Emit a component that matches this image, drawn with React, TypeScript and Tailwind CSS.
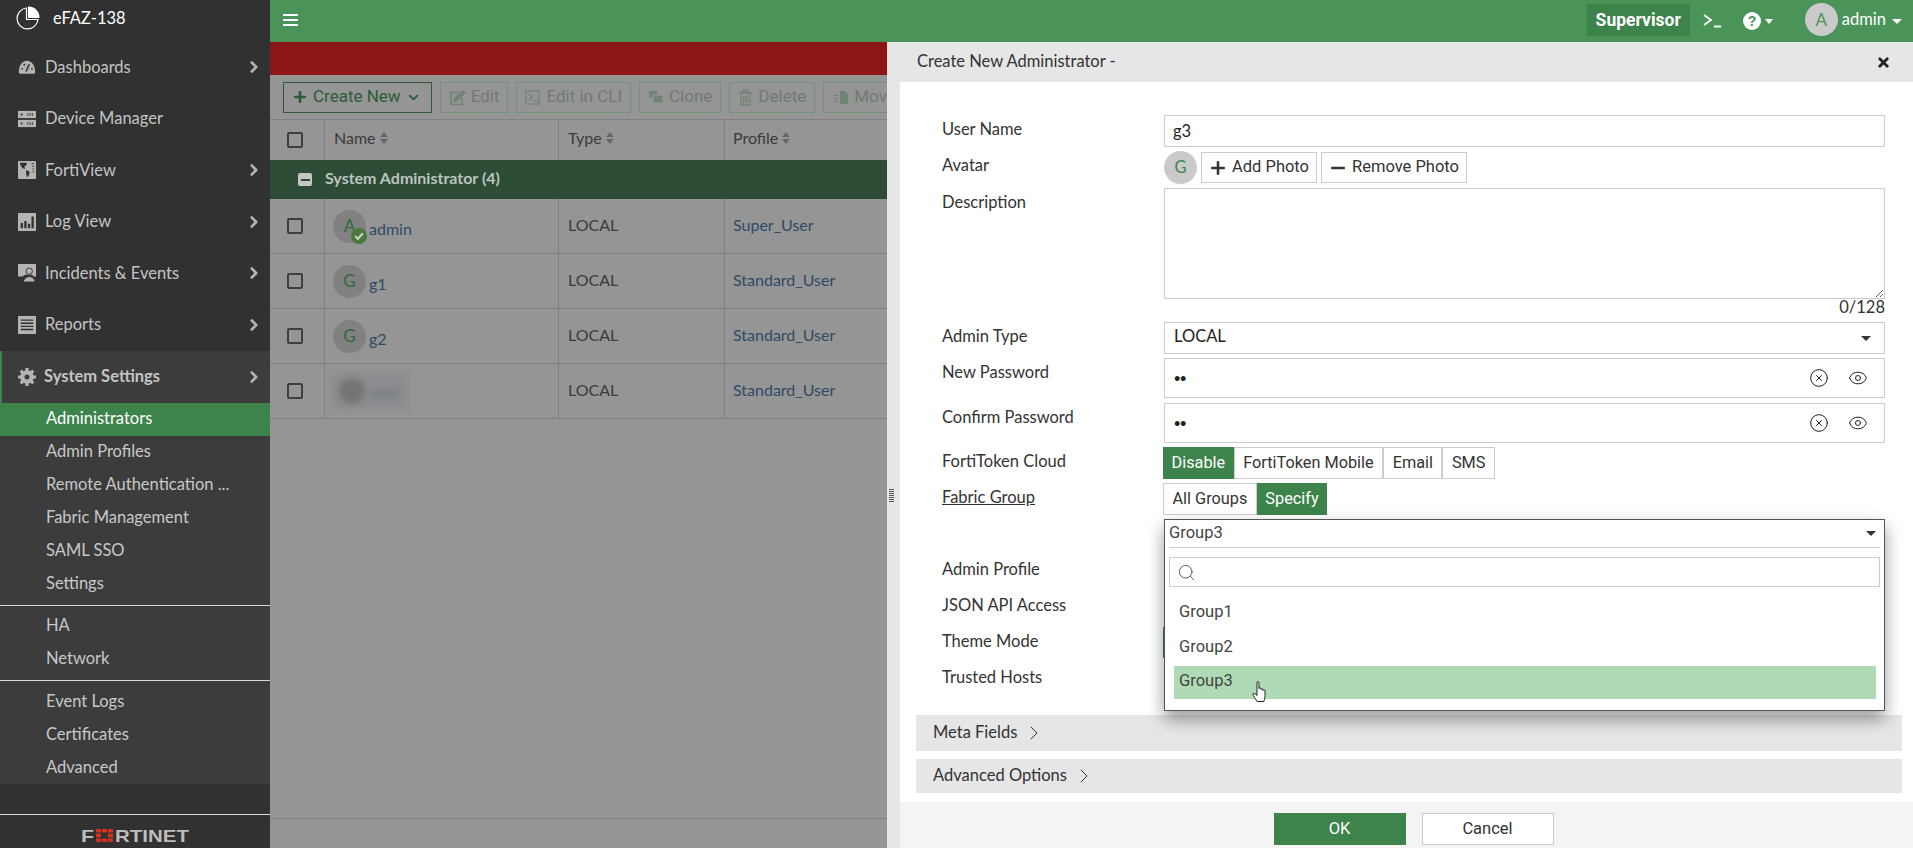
import { ChevronDown, ChevronRight, CircleX, Eye, Search, Minus, Plus, X } from "lucide-react";

const lato = "font-['Lato','Noto_Sans',sans-serif]";
const roboto = "font-['Roboto','Liberation_Sans',sans-serif]";

// sidebar icons, all drawn on a 20x20 box
const DashIcon = () => (
  <svg width="18" height="18" viewBox="0 0 20 20" fill="#b4b4b4">
    <path d="M1 16.500C.4 9 4.500 3 10 3s9.600 6 9 13.500c0 .6-.5 1-1 1H2c-.5 0-1-.4-1-1z" />
    <path d="M9 15l3.500-8" stroke="#313131" strokeWidth="1.800" />
    <circle cx="4.500" cy="12" r="1" fill="#313131" />
    <circle cx="7" cy="7.500" r="1" fill="#313131" />
    <circle cx="15.500" cy="12" r="1" fill="#313131" />
  </svg>
);
const DeviceIcon = () => (
  <svg width="18" height="18" viewBox="0 0 20 20">
    <rect x="0" y="1" width="20" height="8" fill="#b4b4b4" />
    <rect x="0" y="11" width="20" height="8" fill="#b4b4b4" />
    <rect x="3" y="4" width="2" height="2" fill="#313131" />
    <rect x="3" y="14" width="2" height="2" fill="#313131" />
    <path d="M11 3.500v3M13.500 3.500v3M16 3.500v3M11 13.500v3M13.500 13.500v3M16 13.500v3" stroke="#313131" />
  </svg>
);
const MapIcon = () => (
  <svg width="18" height="18" viewBox="0 0 20 20">
    <rect x="0" y="0" width="20" height="20" rx="1" fill="#b4b4b4" />
    <path d="M2 2h8l-1 3-2 1 1 3-3-1-2-3zM9 10l4 2-1 4-2 2-1-4z" fill="#313131" />
    <path d="M15 3h3M16 6h2M16 9h2M16 12h2" stroke="#313131" />
  </svg>
);
const LogIcon = () => (
  <svg width="18" height="18" viewBox="0 0 20 20">
    <rect x="0" y="0" width="20" height="20" fill="#b4b4b4" />
    <path d="M3 11h2.500v6H3zM7 9h2.500v8H7zM11 12h2.500v5H11zM15 4h2.500v13H15z" fill="#313131" />
  </svg>
);
const IncidentIcon = () => (
  <svg width="18" height="18" viewBox="0 0 20 20">
    <path d="M0 0h20v14h-3l-1-2H8l-3 2H0z" fill="#b4b4b4" />
    <circle cx="12.500" cy="8" r="3.500" fill="#b4b4b4" stroke="#313131" />
    <path d="M6 20c0-3 3-6 6.500-6s6.500 3 6.500 6z" fill="#b4b4b4" stroke="#313131" />
  </svg>
);
const ReportIcon = () => (
  <svg width="18" height="18" viewBox="0 0 20 20">
    <rect x="0" y="0" width="20" height="20" fill="#b4b4b4" />
    <path d="M3 4.500h14M3 8h14M3 11.500h14M3 15h14" stroke="#313131" strokeWidth="1.500" />
  </svg>
);
const GearIcon = () => (
  <svg width="18" height="18" viewBox="0 0 20 20">
    <circle cx="10" cy="10" r="7.500" fill="#b4b4b4" />
    <path d="M10 0v20M0 10h20M3 3l14 14M17 3L3 17" stroke="#b4b4b4" strokeWidth="3.500" />
    <circle cx="10" cy="10" r="2.800" fill="#3c3c3c" />
  </svg>
);

const menu = [
  { label: "Dashboards", icon: <DashIcon />, arrow: true },
  { label: "Device Manager", icon: <DeviceIcon />, arrow: false },
  { label: "FortiView", icon: <MapIcon />, arrow: true },
  { label: "Log View", icon: <LogIcon />, arrow: true },
  { label: "Incidents & Events", icon: <IncidentIcon />, arrow: true },
  { label: "Reports", icon: <ReportIcon />, arrow: true },
];

const SubItem = ({ label, active, low }: { label: string; active?: boolean; low?: boolean }) => (
  <div className={`h-[33px] pl-[46px] flex items-center text-[16.500px] ${low ? "pb-[1px]" : "pb-[3px]"} ${active ? "bg-[#3c834c] text-white" : "text-[#c8c8c8]"}`}>{label}</div>
);

const Sidebar = () => (
  <aside className={`w-[270px] shrink-0 h-full bg-[#313131] flex flex-col ${lato}`}>
    <div className="h-[42px] pl-[15px] pb-[5px] flex items-center gap-[13px] text-white text-[16.500px]">
      <svg width="25" height="25" viewBox="0 0 25 25" fill="none">
        <path d="M11.500 2A10.500 10.500 0 1 0 23 13.500H11.500z" stroke="white" strokeWidth="1.200" />
        <path d="M13 .5a11 11 0 0 1 11.500 11.500H13z" fill="white" />
      </svg>
      <span>eFAZ-138</span>
    </div>
    {menu.map((m) => (
      <div key={m.label} className="h-[51.500px] pl-[18px] pr-[7px] pb-[1px] flex items-center text-[#c4c4c4] text-[16.500px]">
        <span className="w-[18px] mr-[9px] flex">{m.icon}</span>
        <span className="flex-1">{m.label}</span>
        {m.arrow && <ChevronRight size={18} strokeWidth={3.500} className="text-[#b4b4b4]" />}
      </div>
    ))}
    <div className="h-[52px] bg-[#3c3c3c] border-l-2 border-[#3c834c] pl-[16px] pr-[7px] pb-[1px] flex items-center text-[#c4c4c4] text-[16.500px] font-bold">
      <span className="w-[18px] mr-[8px] flex"><GearIcon /></span>
      <span className="flex-1">System Settings</span>
      <ChevronRight size={18} strokeWidth={3.500} className="text-[#b4b4b4]" />
    </div>
    <div className="bg-[#3c3c3c]">
      <SubItem label="Administrators" active />
      <SubItem label="Admin Profiles" />
      <SubItem label="Remote Authentication ..." />
      <SubItem label="Fabric Management" />
      <SubItem label="SAML SSO" />
      <SubItem label="Settings" />
      <div className="h-[8px] flex items-center"><div className="h-px w-full bg-[#d8d8d8]" /></div>
      <SubItem label="HA" low />
      <SubItem label="Network" low />
      <div className="h-[10px] flex items-center"><div className="h-px w-full bg-[#d8d8d8]" /></div>
      <SubItem label="Event Logs" low />
      <SubItem label="Certificates" low />
      <SubItem label="Advanced" low />
    </div>
    <div className="h-[30px] shrink-0" />
    <div className="flex-1 border-t border-[#d8d8d8] flex items-center justify-center pt-[6px]">
      <svg width="108" height="20" viewBox="0 -4 108 20">
        <text x="0" y="12.500" fontFamily="Liberation Sans" fontWeight="700" fontSize="17" fill="#bdbdbd" textLength="13" lengthAdjust="spacingAndGlyphs">F</text>
        <text x="34" y="12.500" fontFamily="Liberation Sans" fontWeight="700" fontSize="17" fill="#bdbdbd" textLength="74" lengthAdjust="spacingAndGlyphs">RTINET</text>
        <g fill="#d8301f">
          <rect x="15" y="0" width="5" height="3.500" /><rect x="21" y="0" width="5" height="3.500" /><rect x="27" y="0" width="5" height="3.500" />
          <rect x="15" y="4.700" width="5" height="3.500" /><rect x="27" y="4.700" width="5" height="3.500" />
          <rect x="15" y="9.400" width="5" height="3.500" /><rect x="21" y="9.400" width="5" height="3.500" /><rect x="27" y="9.400" width="5" height="3.500" />
        </g>
      </svg>
    </div>
  </aside>
);

const Topbar = () => (
  <header className={`h-[42px] shrink-0 bg-[#4a9359] flex items-center pl-[13px] pr-[11px] text-white ${roboto}`}>
    <div className="flex flex-col gap-[2.500px] w-[15px] -mt-[2px]">
      <span className="h-[2.500px] bg-white" /><span className="h-[2.500px] bg-white" /><span className="h-[2.500px] bg-white" />
    </div>
    <div className="flex-1" />
    <div className="h-[32px] px-[9px] -mt-[2px] flex items-center bg-[#3c834c] font-bold text-[17.500px]">Supervisor</div>
    <svg className="ml-[13px] -mt-[1px]" width="18" height="15" viewBox="0 0 18 15" fill="none" stroke="white" strokeWidth="1.800">
      <path d="M1 2l7 5-7 5M11 13.500h7" />
    </svg>
    <svg className="ml-[22px]" width="18" height="18" viewBox="0 0 18 18">
      <circle cx="9" cy="9" r="9" fill="white" />
      <text x="9" y="14" fontSize="14" fontWeight="700" textAnchor="middle" fill="#4a9359" fontFamily="Liberation Sans">?</text>
    </svg>
    <span className="ml-[4px] w-0 h-0 border-x-[4.500px] border-x-transparent border-t-[5px] border-t-white" />
    <div className={`ml-[32px] -mt-[3px] w-[33px] h-[33px] rounded-full bg-[#cacaca] flex items-center justify-center text-[#4a9359] text-[17px] ${lato}`}>A</div>
    <span className={`ml-[4px] pb-[4px] text-[16.500px] ${lato}`}>admin</span>
    <span className="ml-[6px] w-0 h-0 border-x-[5px] border-x-transparent border-t-[5px] border-t-white" />
  </header>
);

const ToolButton = ({ label, icon, primary }: { label: string; icon: React.ReactNode; primary?: boolean }) => (
  <div className={`h-[31px] flex items-center gap-[5px] border text-[17px] shrink-0 pl-[8px] ${primary ? "pr-[10px] border-[#2c5b36] text-[#2c5b36]" : "pr-[8px] border-[#6f9577] text-[#6e7b71]"}`}>
    {icon}
    {label}
    {primary && <ChevronDown size={15} strokeWidth={3} className="text-[#2c5b36]" />}
  </div>
);

const Sort = () => (
  <span className="inline-flex flex-col gap-[2px] ml-[4px] align-middle">
    <span className="w-0 h-0 border-x-[4px] border-x-transparent border-b-[5px] border-b-[#666]" />
    <span className="w-0 h-0 border-x-[4px] border-x-transparent border-t-[5px] border-t-[#666]" />
  </span>
);

const Check = () => <span className="w-[16px] h-[16px] border-2 border-[#3e3e3e] rounded-[2px] block" />;

const rows = [
  { name: "admin", letter: "A", profile: "Super_User" },
  { name: "g1", letter: "G", profile: "Standard_User" },
  { name: "g2", letter: "G", profile: "Standard_User" },
  { name: "", letter: "", profile: "Standard_User" },
];

const AdminTable = () => (
  <div className={`w-[617px] shrink-0 h-full overflow-hidden bg-[#959595] flex flex-col ${lato}`}>
    <div className="h-[33px] bg-[#8c1515] shrink-0" />
    <div className={`h-[44px] shrink-0 pl-[13px] flex items-center gap-[8px] overflow-hidden ${roboto}`}>
      <ToolButton primary label="Create New" icon={<Plus size={16} strokeWidth={4} className="text-[#2c5b36]" />} />
      <ToolButton label="Edit" icon={<svg width="17" height="17" viewBox="0 0 17 17" fill="none" stroke="#6f8475" strokeWidth="1.600"><path d="M13 9v6.500H2v-12h8" /><path d="M5 12l1-3 8-7 2 2-8 7z" fill="#6f8475" /></svg>} />
      <ToolButton label="Edit in CLI" icon={<svg width="16" height="16" viewBox="0 0 16 16" fill="none" stroke="#6f8475" strokeWidth="1.300"><rect x="1" y="2" width="13" height="13" /><path d="M4 5l3 3-3 3M8 12h4" /></svg>} />
      <ToolButton label="Clone" icon={<svg width="16" height="14" viewBox="0 0 16 14" fill="#6f8475"><rect x="1" y="1" width="8" height="7" /><rect x="5" y="5" width="10" height="8" stroke="#959595" /></svg>} />
      <ToolButton label="Delete" icon={<svg width="15" height="17" viewBox="0 0 15 17" fill="none" stroke="#6f8475" strokeWidth="1.300"><path d="M1 4h13M3 4v12h9V4M5 4V1.500h5V4M5.500 7v7M7.500 7v7M9.500 7v7" /></svg>} />
      <ToolButton label="Move" icon={<svg width="17" height="15" viewBox="0 0 17 15" fill="#6f8475"><path d="M8 1h5l3 3v10H8zM1 5h5v1H1zM3 8h3v1H3zM1 11h5v1H1z" /></svg>} />
    </div>
    <div className="flex-1 min-h-0">
      <div className="grid grid-cols-[55px_234px_166px_1fr] h-[41px] border-t border-[#808080] text-[#3b3b3b] text-[16px]">
        <div className="flex items-center pl-[17px] border-r border-[#808080]"><Check /></div>
        <div className="flex items-center pl-[9px] pb-[4px] border-r border-[#808080]">Name<Sort /></div>
        <div className="flex items-center pl-[9px] pb-[4px] border-r border-[#808080]">Type<Sort /></div>
        <div className="flex items-center pl-[8px] pb-[4px]">Profile<Sort /></div>
      </div>
      <div className="h-[39px] bg-[#2d4c36] flex items-center pl-[28px] text-[#bcc4be] font-bold text-[16px]">
        <span className="w-[14px] h-[13px] bg-[#c6c6c6] rounded-[2px] mr-[13px] flex items-center justify-center"><span className="w-[9px] h-[2px] bg-[#2d4c36]" /></span>
        <span className="pb-[3px]">System Administrator (4)</span>
      </div>
      {rows.map((r) => (
        <div key={r.profile + r.name} className="grid grid-cols-[55px_234px_166px_1fr] h-[55px] border-b border-[#808080] text-[16px]">
          <div className="flex items-center pl-[17px] border-r border-[#808080]"><Check /></div>
          <div className="flex items-center pl-[8px] border-r border-[#808080]">
            {r.letter ? (
              <>
                <span className="relative w-[33px] h-[33px] rounded-full bg-[#818181] flex items-center justify-center text-[#2e6b3b] text-[17px]">
                  {r.letter}
                  {r.name === "admin" && (
                    <span className="absolute -right-px -bottom-[1px] w-[16px] h-[16px] rounded-full bg-[#4a7a3a] flex items-center justify-center">
                      <svg width="10" height="10" viewBox="0 0 9 9" fill="none" stroke="#c9c9c9" strokeWidth="2"><path d="M1 4.500l2.500 2.500L8 2" /></svg>
                    </span>
                  )}
                </span>
                <span className="ml-[3px] mt-[5px] text-[#2f4a66]">{r.name}</span>
              </>
            ) : (
              <span className="-ml-[2px] w-[77px] h-[38px] bg-[#8b8d90] blur-[3px] flex items-center pl-[8px] gap-[6px]">
                <span className="w-[26px] h-[26px] rounded-full bg-[#747474]" />
                <span className="w-[28px] h-[10px] mt-[6px] bg-[#7e8186]" />
              </span>
            )}
          </div>
          <div className="flex items-center pl-[9px] pb-[2px] border-r border-[#808080] text-[#3b3b3b]">LOCAL</div>
          <div className="flex items-center pl-[8px] pb-[2px] text-[#2f4a66]">{r.profile}</div>
        </div>
      ))}
    </div>
    <div className="h-[30px] shrink-0 border-t border-[#808080]" />
  </div>
);

const Field = ({ label, underline, className, children }: { label?: string; underline?: boolean; className?: string; children?: React.ReactNode }) => (
  <div className={`grid grid-cols-[222px_1fr] ${className ?? ""}`}>
    <div className={`pt-[4px] text-[16.500px] leading-[20px] text-[#333] ${underline ? "underline" : ""}`}>{label}</div>
    <div>{children}</div>
  </div>
);

const Segment = ({ items, active }: { items: string[]; active: string }) => (
  <div className={`flex h-[32px] -ml-px text-[16.300px] ${roboto}`}>
    {items.map((it) => (
      <span key={it} className={it === active ? "bg-[#3c834c] text-white px-[8.500px] flex items-center" : "border border-[#ccc] px-[8.500px] flex items-center text-[#333]"}>{it}</span>
    ))}
  </div>
);

const PasswordBox = () => (
  <div className="h-[40px] border border-[#ccc] flex items-center pl-[9px] pr-[16px] text-[#222]">
    <span className="flex-1 pb-[2px] text-[11px] tracking-[-0.500px] font-bold leading-none">••</span>
    <CircleX size={20} strokeWidth={1.200} className="text-[#222]" />
    <Eye size={20} strokeWidth={1.200} className="text-[#222] ml-[19px]" />
  </div>
);

const DropdownPanel = () => (
  <div className={`absolute left-[277px] top-[477px] w-[721px] h-[192px] bg-white border border-[#555] shadow-[0_8px_16px_rgba(0,0,0,0.4)] px-[4px] text-[16.500px] text-[#444] ${roboto}`}>
    <div className="h-[28px] border-b border-[#ccc] flex items-center justify-between pr-[4px] text-[#444]">
      <span>Group3</span>
      <span className="w-0 h-0 border-x-[5px] border-x-transparent border-t-[5px] border-t-[#333]" />
    </div>
    <div className="mt-[9px] h-[30px] border border-[#ccc] flex items-center pl-[7px]">
      <Search size={19} strokeWidth={1.200} className="text-[#555]" />
    </div>
    <div className="mt-[10px] h-[35px] pb-[5px] flex items-center pl-[10px]">Group1</div>
    <div className="h-[34px] pb-[3px] flex items-center pl-[10px]">Group2</div>
    <div className="relative h-[33px] ml-[5px] mr-[4px] bg-[#aedab6] flex items-center pl-[5px] pb-[2px]">
      Group3
      <svg className="absolute left-[78px] top-[14px]" width="16" height="24" viewBox="0 0 16 23" fill="white" stroke="#222" strokeWidth="1">
        <path d="M5 2c0-1.400 2-1.400 2 0v6c0-1 2-1 2 0v1c0-1 2-1 2 0v1c0-1 2-1 2 0v5c0 3-1 5-1 6H5c-1-2-4-6-4-7 0-2 2-1 4 1z" />
      </svg>
    </div>
  </div>
);

const Panel = () => (
  <div className={`relative flex-1 h-full bg-[#e6e6e6] pl-[13px] flex flex-col ${lato}`}>
    <div className="absolute left-0 top-0 h-full w-[12px] flex items-center justify-center">
      <span className="w-[5px] h-[14px] mt-[100px] -ml-[3px] bg-[repeating-linear-gradient(0deg,#555_0,#555_1px,transparent_1px,transparent_2px)]" />
    </div>
    <div className="-ml-[13px] h-[40px] shrink-0 bg-[#e6e6e6] flex items-center pl-[30px] pr-[22px] pb-[2px] text-[16.500px] text-[#333]">
      <span className="flex-1">Create New Administrator -</span>
      <X size={15} strokeWidth={4.500} className="text-[#222] mt-[2px]" />
    </div>
    <div className="flex-1 bg-white flex flex-col min-h-0">
      <div className="flex-1 pl-[42px] pr-[28px] pt-[33px]">
        <Field label="User Name">
          <div className="h-[32px] border border-[#ccc] flex items-center pl-[8px] text-[16.500px] text-[#222]">g3</div>
        </Field>
        <Field label="Avatar" className="mt-[4px]">
          <div className={`flex items-center h-[33px] gap-[4px] text-[16.500px] text-[#333] ${roboto}`}>
            <span className={`w-[33px] h-[33px] rounded-full bg-[#cacaca] flex items-center justify-center text-[#3c834c] ${lato}`}>G</span>
            <span className="h-[31px] border border-[#ccc] pl-[6px] pr-[7px] flex items-center gap-[4px]"><Plus size={20} strokeWidth={3} />Add Photo</span>
            <span className="h-[31px] border border-[#ccc] pl-[6px] pr-[7px] flex items-center gap-[4px]"><Minus size={20} strokeWidth={3} />Remove Photo</span>
          </div>
        </Field>
        <Field label="Description" className="mt-[4px]">
          <div className="relative h-[111px] border border-[#ccc]">
            <svg className="absolute right-[1px] bottom-[1px]" width="8" height="8" viewBox="0 0 8 8" stroke="#666"><path d="M1 8l7-7M5 8l3-3" /></svg>
          </div>
          <div className="h-[23px] text-right text-[16.500px] leading-[17px] text-[#333]">0/128</div>
        </Field>
        <Field label="Admin Type">
          <div className="h-[32px] border border-[#ccc] flex items-center justify-between pl-[9px] pr-[13px] text-[16.500px] text-[#222]">
            <span className="pb-[3px]">LOCAL</span>
            <span className="w-0 h-0 border-x-[5px] border-x-transparent border-t-[5px] border-t-[#333]" />
          </div>
        </Field>
        <Field label="New Password" className="mt-[4px]"><PasswordBox /></Field>
        <Field label="Confirm Password" className="mt-[5px]"><PasswordBox /></Field>
        <Field label="FortiToken Cloud" className="mt-[4px]">
          <Segment items={["Disable", "FortiToken Mobile", "Email", "SMS"]} active="Disable" />
        </Field>
        <Field label="Fabric Group" underline className="mt-[4px]">
          <Segment items={["All Groups", "Specify"]} active="Specify" />
        </Field>
        <Field className="h-[40px]" />
        <Field label="Admin Profile" className="h-[36px]" />
        <Field label="JSON API Access" className="h-[36px]" />
        <Field label="Theme Mode" className="h-[36px]">
          <div className="-ml-px w-[60px] h-[31px] bg-[#3c834c]" />
        </Field>
        <Field label="Trusted Hosts" className="h-[36px]" />
      </div>
      <div className="pl-[16px] pr-[11px] shrink-0 text-[16.500px] text-[#333]">
        <div className="h-[36px] bg-[#e6e6e6] flex items-center pl-[17px] gap-[5px]"><span className="pb-[2px]">Meta Fields</span><ChevronRight size={24} strokeWidth={1} /></div>
        <div className="h-[34px] mt-[8px] bg-[#e6e6e6] flex items-center pl-[17px] gap-[5px]"><span className="pb-[2px]">Advanced Options</span><ChevronRight size={24} strokeWidth={1} /></div>
      </div>
      <div className={`mt-[9px] h-[46px] shrink-0 bg-[#f4f4f4] flex items-start justify-center gap-[16px] pl-[14px] pt-[11px] text-[16.500px] ${roboto}`}>
        <span className="w-[132px] h-[32px] bg-[#3c834c] text-white flex items-center justify-center">OK</span>
        <span className="w-[132px] h-[32px] bg-white border border-[#ccc] text-[#333] flex items-center justify-center">Cancel</span>
      </div>
    </div>
    <DropdownPanel />
  </div>
);

export default function App() {
  return (
    <div className="w-[1913px] h-[848px] flex overflow-hidden bg-white">
      <Sidebar />
      <div className="flex-1 min-w-0 flex flex-col">
        <Topbar />
        <div className="flex-1 min-h-0 flex">
          <AdminTable />
          <Panel />
        </div>
      </div>
    </div>
  );
}
